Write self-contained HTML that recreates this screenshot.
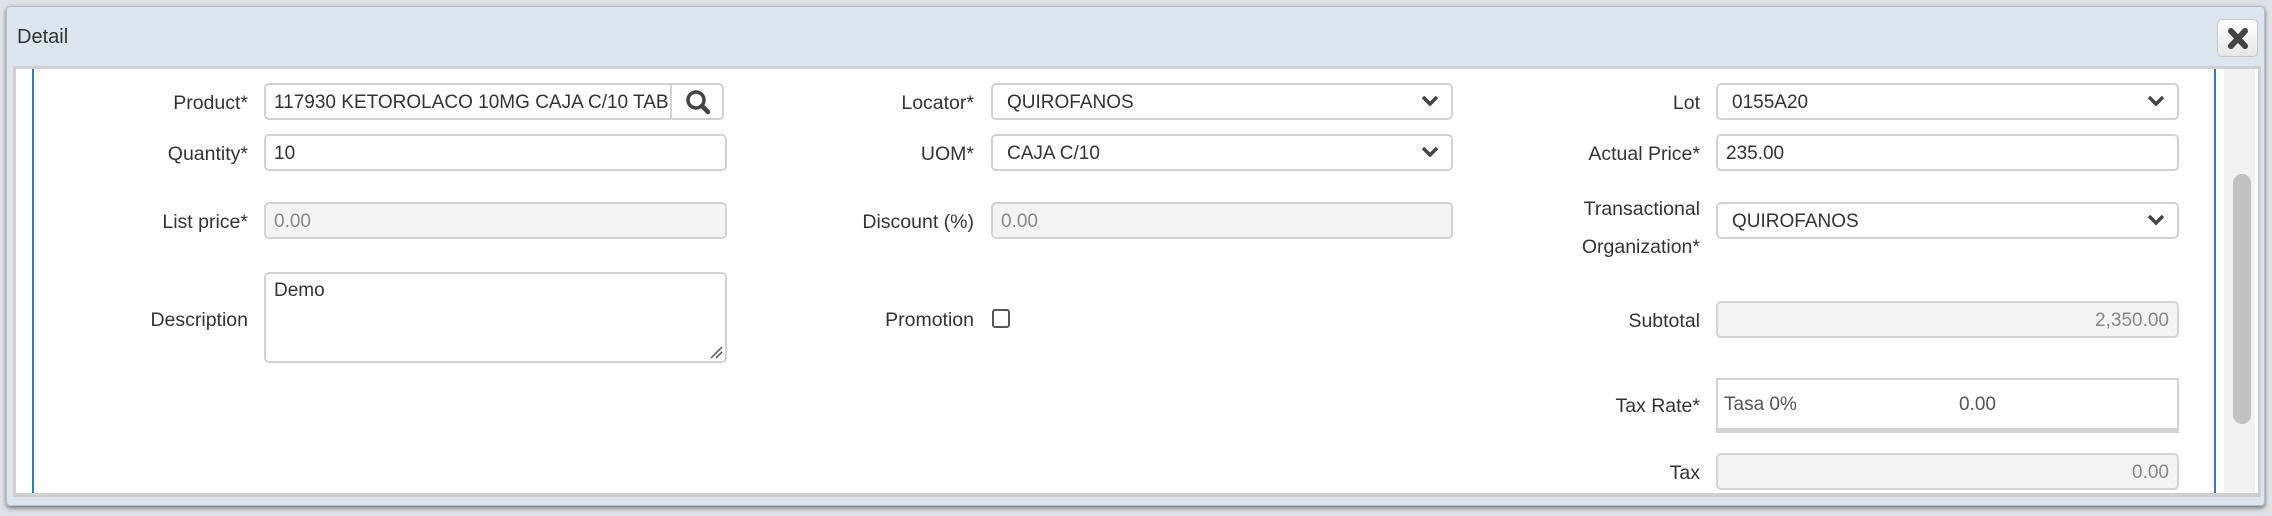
<!DOCTYPE html>
<html><head><meta charset="utf-8"><style>
*{box-sizing:border-box;margin:0;padding:0}
body{width:2272px;height:516px;overflow:hidden;background:#8fa7bf;font-family:"Liberation Sans",sans-serif;color:#333;position:relative}
.bg{position:absolute;left:0;top:0;width:2272px;height:516px;background:#dfe3e8}
.dlg{position:absolute;left:6px;top:6px;width:2259px;height:500px;background:#dce5ef;border:1px solid #b8bcc0;border-radius:4px;box-shadow:0 2px 5px rgba(0,0,0,.5)}
.title{position:absolute;left:10px;top:19px;font-size:20px;color:#333}
.close{position:absolute;left:2210px;top:12px;width:41px;height:38px;border:1px solid #c8c8c8;border-radius:5px;background:linear-gradient(#fff,#e6e6e6)}
.bodyw{position:absolute;left:6px;top:59px;width:2248px;height:431px;background:#fff;border:3px solid #cfcfcf;border-bottom:4px solid #cfcfcf}
.vl{position:absolute;top:0;width:2px;height:100%;background:#3579bd}
.sb{position:absolute;left:2214px;top:0;width:31px;height:100%;background:#f1f1f1}
.thumb{position:absolute;left:2233px;top:174px;width:18px;height:250px;background:#c1c1c1;border-radius:9px}
.l{position:absolute;font-size:19.5px;text-align:right;color:#333;line-height:22px}
.i{position:absolute;height:37px;border:2px solid #d2d2d2;border-radius:5px;background:#fff;font-size:19px;line-height:35px;padding-left:8px;color:#333}
.d{background:#f3f3f3;color:#888}
.ch{position:absolute;right:12px;top:9px}
</style></head><body>
<div class="bg"></div>
<div class="dlg">
 <div class="title">Detail</div>
 <div class="close"><svg width="41" height="38" viewBox="0 0 41 38"><path d="M13 11 L27 26 M27 11 L13 26" stroke="#444" stroke-width="6" stroke-linecap="round"/></svg></div>
 <div class="bodyw">
  <div class="vl" style="left:16px"></div>
  <div class="vl" style="left:2198px"></div>
  <div class="sb" style="left:2208px"></div>
 </div>
</div>
<div class="thumb"></div>

<div class="l" style="right:2024px;top:92px">Product*</div>
<div class="i" style="left:264px;top:83px;width:460px;overflow:hidden;white-space:nowrap">117930 KETOROLACO 10MG CAJA C/10 TABS
 <div style="position:absolute;right:0;top:0;width:52px;height:33px;border-left:2px solid #d2d2d2;background:#fff"><svg width="52" height="33" viewBox="0 0 52 33"><circle cx="24" cy="15" r="8" stroke="#444" stroke-width="3.5" fill="none"/><path d="M30 21 L36 27" stroke="#444" stroke-width="4.5" stroke-linecap="round"/></svg></div></div>
<div class="l" style="right:2024px;top:143px">Quantity*</div>
<div class="i" style="left:264px;top:134px;width:463px">10</div>
<div class="l" style="right:2024px;top:211px">List price*</div>
<div class="i d" style="left:264px;top:202px;width:463px">0.00</div>
<div class="l" style="right:2024px;top:309px">Description</div>
<div class="i" style="left:264px;top:272px;width:463px;height:91px;line-height:34px">Demo
 <svg style="position:absolute;right:2px;bottom:2px" width="14" height="14"><path d="M2 13 L13 2 M7 13 L13 7" stroke="#555" stroke-width="1.5"/></svg></div>

<div class="l" style="right:1298px;top:92px">Locator*</div>
<div class="i" style="left:991px;top:83px;width:462px;padding-left:14px">QUIROFANOS<svg class="ch" width="18" height="14"><path d="M2 3 L9 10 L16 3" stroke="#444" stroke-width="3.5" fill="none"/></svg></div>
<div class="l" style="right:1298px;top:143px">UOM*</div>
<div class="i" style="left:991px;top:134px;width:462px;padding-left:14px">CAJA C/10<svg class="ch" width="18" height="14"><path d="M2 3 L9 10 L16 3" stroke="#444" stroke-width="3.5" fill="none"/></svg></div>
<div class="l" style="right:1298px;top:211px">Discount (%)</div>
<div class="i d" style="left:991px;top:202px;width:462px">0.00</div>
<div class="l" style="right:1298px;top:309px">Promotion</div>
<div style="position:absolute;left:992px;top:309px;width:18px;height:19px;border:2px solid #555;border-radius:3px"></div>

<div class="l" style="right:572px;top:92px">Lot</div>
<div class="i" style="left:1716px;top:83px;width:463px;padding-left:14px">0155A20<svg class="ch" width="18" height="14"><path d="M2 3 L9 10 L16 3" stroke="#444" stroke-width="3.5" fill="none"/></svg></div>
<div class="l" style="right:572px;top:143px">Actual Price*</div>
<div class="i" style="left:1716px;top:134px;width:463px">235.00</div>
<div class="l" style="right:572px;top:190px;line-height:38px">Transactional<br>Organization*</div>
<div class="i" style="left:1716px;top:202px;width:463px;padding-left:14px">QUIROFANOS<svg class="ch" width="18" height="14"><path d="M2 3 L9 10 L16 3" stroke="#444" stroke-width="3.5" fill="none"/></svg></div>
<div class="l" style="right:572px;top:310px">Subtotal</div>
<div class="i d" style="left:1716px;top:301px;width:463px;text-align:right;padding-right:8px">2,350.00</div>
<div class="l" style="right:572px;top:395px">Tax Rate*</div>
<div style="position:absolute;left:1716px;top:378px;width:463px;height:55px;border:2px solid #d2d2d2;border-bottom:5px solid #d2d2d2;font-size:19px;color:#555;line-height:50px;padding-left:6px">Tasa 0%<span style="position:absolute;left:241px">0.00</span></div>
<div class="l" style="right:572px;top:462px">Tax</div>
<div class="i d" style="left:1716px;top:453px;width:463px;text-align:right;padding-right:8px">0.00</div>
</body></html>
